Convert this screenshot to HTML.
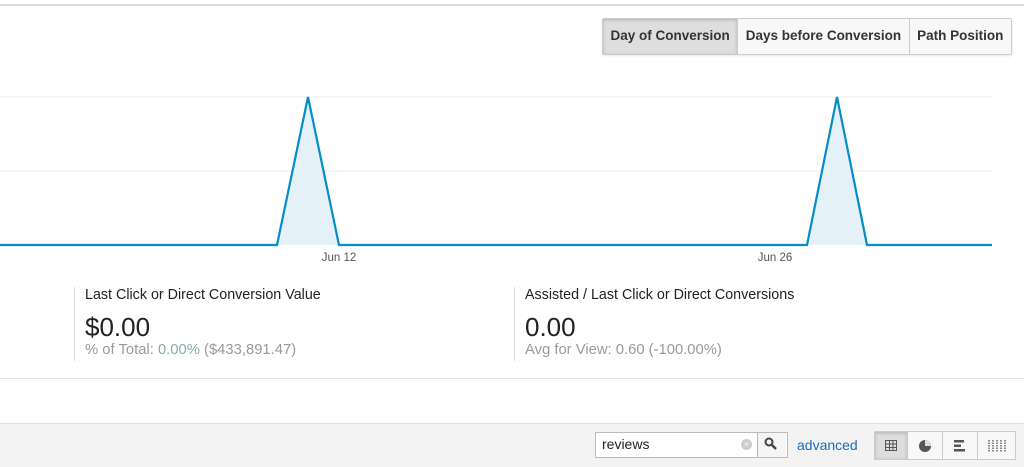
<!DOCTYPE html>
<html><head><style>
body{margin:0;width:1024px;height:466px;background:#fff;font-family:"Liberation Sans",Arial,sans-serif;position:relative;overflow:hidden}
.a{position:absolute}
.btns{left:602px;top:18px;height:35px;display:flex;border:1px solid #ccc;border-radius:2px;box-shadow:0 1px 2px rgba(0,0,0,.1)}
.btns div{padding:0 7.5px;line-height:34px;font-size:13.5px;font-weight:bold;color:#333;background:#f8f8f8;border-left:1px solid #ccc}
.btns div:first-child{border-left:none;background:#dedede;box-shadow:inset 0 1px 3px rgba(0,0,0,.2)}
.lbl{font-size:14.3px;color:#222}
.big{font-size:26px;color:#222}
.sub{font-size:14.8px;color:#999}
</style></head><body>
<div class="a" style="left:0;top:4px;width:1024px;height:2px;background:#ddd"></div>
<div class="a btns"><div>Day of Conversion</div><div>Days before Conversion</div><div>Path Position</div></div>
<svg class="a" style="left:0;top:0" width="1024" height="270">
<line x1="0" y1="97" x2="992" y2="97" stroke="#eee"/>
<line x1="0" y1="171" x2="992" y2="171" stroke="#eee"/>
<polygon points="277,245 308,97 339,245" fill="#e4f1f9"/>
<polygon points="807,245 837,97 867,245" fill="#e4f1f9"/>
<polyline points="0,245 277,245 308,97 339,245 807,245 837,97 867,245 992,245" fill="none" stroke="#058dc7" stroke-width="2.2"/>
<text x="339" y="261" font-size="11.5" fill="#555" text-anchor="middle" font-family="Liberation Sans">Jun 12</text>
<text x="775" y="261" font-size="11.5" fill="#555" text-anchor="middle" font-family="Liberation Sans">Jun 26</text>
</svg>
<div class="a" style="left:74px;top:287px;width:1px;height:74px;background:#ddd"></div>
<div class="a" style="left:514px;top:287px;width:1px;height:74px;background:#ddd"></div>
<div class="a lbl" style="left:85px;top:287px">Last Click or Direct Conversion Value</div>
<div class="a big" style="left:85px;top:312px">$0.00</div>
<div class="a sub" style="left:85px;top:342px">% of Total: <span style="color:#8aa">0.00%</span> ($433,891.47)</div>
<div class="a lbl" style="left:525px;top:287px">Assisted / Last Click or Direct Conversions</div>
<div class="a big" style="left:525px;top:312px">0.00</div>
<div class="a sub" style="left:525px;top:342px">Avg for View: 0.60 (-100.00%)</div>
<div class="a" style="left:0;top:378px;width:1024px;height:1px;background:#e5e5e5"></div>
<div class="a" style="left:0;top:423px;width:1024px;height:43px;background:#f3f3f3;border-top:1px solid #e0e0e0"></div>
<div class="a" style="left:595px;top:432px;width:191px;height:24px;border:1px solid #bbb;background:#fff"></div>
<div class="a" style="left:602px;top:436px;font-size:14px;color:#222">reviews</div>
<div class="a" style="left:741px;top:439px;width:11px;height:11px;border-radius:50%;background:#ccc;color:#fff;font-size:9px;line-height:11px;text-align:center">×</div>
<div class="a" style="left:757px;top:432px;width:1px;height:26px;background:#bbb"></div>
<div class="a" style="left:758px;top:433px;width:28px;height:24px;background:#f5f5f5"></div>
<svg class="a" style="left:764px;top:437px" width="14" height="14"><circle cx="5" cy="5" r="3.5" fill="none" stroke="#444" stroke-width="2"/><line x1="8" y1="8" x2="12" y2="12" stroke="#444" stroke-width="2.5"/></svg>
<div class="a" style="left:797px;top:437px;font-size:14px;color:#1a6eb8">advanced</div>
<div class="a" style="left:874px;top:431px;width:140px;height:27px;border:1px solid #ccc;background:#f8f8f8;display:flex">
<div style="width:32px;background:#ddd;border-right:1px solid #ccc;box-shadow:inset 0 1px 3px rgba(0,0,0,.2)"><svg width="32" height="27"><g stroke="#555" fill="none"><rect x="10.5" y="8.5" width="11" height="10"/><line x1="14.5" y1="8" x2="14.5" y2="19"/><line x1="18" y1="8" x2="18" y2="19"/><line x1="10" y1="12" x2="22" y2="12"/><line x1="10" y1="15.5" x2="22" y2="15.5"/></g></svg></div>
<div style="width:34px;border-right:1px solid #ccc"><svg width="34" height="27"><circle cx="17" cy="14" r="6" fill="#555"/><path d="M17 14V8A6 6 0 0 1 23 14Z" fill="#ddd"/></svg></div>
<div style="width:34px;border-right:1px solid #ccc"><svg width="34" height="27"><g fill="#555"><rect x="11" y="8" width="10" height="2.5"/><rect x="11" y="12.5" width="7" height="2.5"/><rect x="11" y="17" width="11" height="2.5"/></g></svg></div>
<div style="width:38px"><svg width="38" height="27"><g stroke="#666" stroke-width="1.5" stroke-dasharray="1.5 1"><line x1="11" y1="8" x2="11" y2="20"/><line x1="15" y1="8" x2="15" y2="20"/><line x1="19" y1="8" x2="19" y2="20"/><line x1="23" y1="8" x2="23" y2="20"/><line x1="27" y1="8" x2="27" y2="20"/></g></svg></div>
</div>
</body></html>
